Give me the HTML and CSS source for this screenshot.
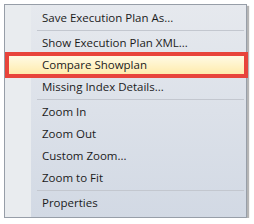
FILE: index.html
```html
<!DOCTYPE html>
<html>
<head>
<meta charset="utf-8">
<link rel="stylesheet" href="styles.css">
</head>
<body>
<div class="menu">
  <div class="item">Save Execution Plan As...</div>
  <div class="sep"></div>
  <div class="item">Show Execution Plan XML...</div>
  <div class="item active">Compare Showplan</div>
  <div class="item">Missing Index Details...</div>
  <div class="sep"></div>
  <div class="item">Zoom In</div>
  <div class="item">Zoom Out</div>
  <div class="item">Custom Zoom...</div>
  <div class="item">Zoom to Fit</div>
  <div class="sep"></div>
  <div class="item">Properties</div>
</div>
</body>
</html>
```
FILE: styles.css
```css
html, body {
  margin: 0;
  padding: 0;
  background: #ffffff;
}
body {
  padding: 4px 0 0 4px;
}
.menu {
  width: 241px;
  border: 1px solid #979ea8;
  padding: 2px 0 3px 0;
  display: flex;
  flex-direction: column;
  background:
    linear-gradient(to right, #e9ecef 0, #e9ecef 26px, transparent 26px),
    linear-gradient(#e6e9ee, #d2d9e4);
  box-shadow: 2px 2px 1px rgba(90, 90, 90, 0.45);
  font-family: "Open Sans", "Noto Sans", sans-serif;
  font-size: 11.5px;
  color: #1b1b1b;
}
.item {
  height: 22px;
  line-height: 22px;
  padding-left: 37px;
  white-space: nowrap;
}
.sep {
  height: 1px;
  margin: 1px 2px 1px 32px;
  background: #c3c7cf;
}
.active {
  position: relative;
  background: linear-gradient(#fffbea 0%, #fff4cc 45%, #ffe9a6 100%);
}
.active::after {
  content: "";
  position: absolute;
  left: 0;
  right: -2px;
  top: -2px;
  bottom: -2px;
  border: 4px solid #e8443b;
}
```
